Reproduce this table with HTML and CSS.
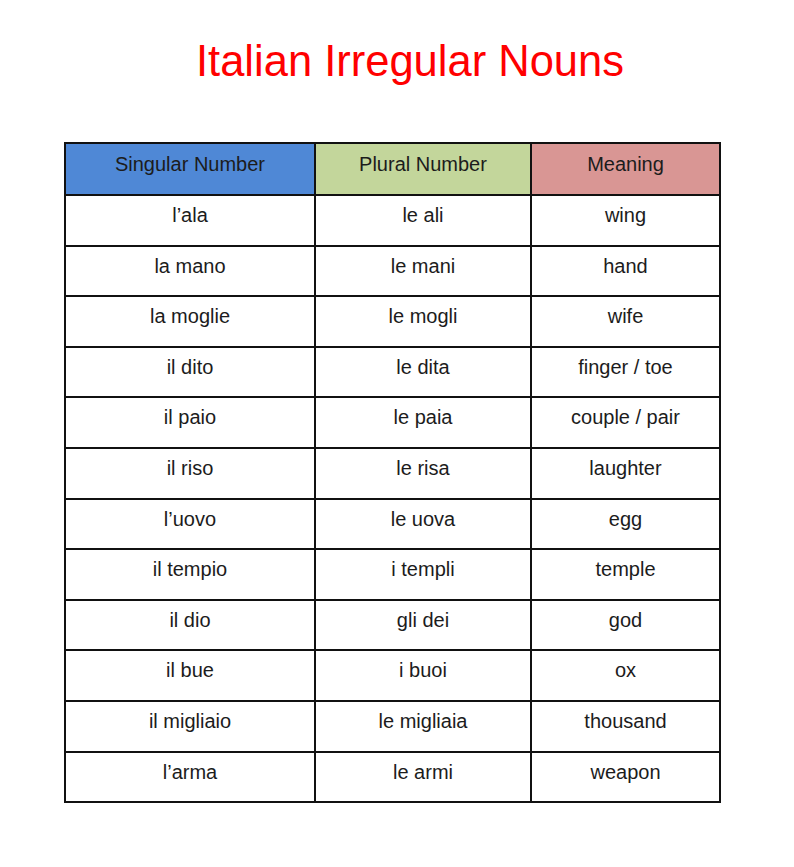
FILE: index.html
```html
<!DOCTYPE html>
<html>
<head>
<meta charset="utf-8">
<link rel="stylesheet" href="styles.css">
</head>
<body>
<div class="page">
  <h1 class="title">Italian Irregular Nouns</h1>
  <table class="nouns">
    <thead>
      <tr>
        <th class="h-sing">Singular Number</th>
        <th class="h-plur">Plural Number</th>
        <th class="h-mean">Meaning</th>
      </tr>
    </thead>
    <tbody>
      <tr><td>l’ala</td><td>le ali</td><td>wing</td></tr>
      <tr><td>la mano</td><td>le mani</td><td>hand</td></tr>
      <tr><td>la moglie</td><td>le mogli</td><td>wife</td></tr>
      <tr><td>il dito</td><td>le dita</td><td>finger / toe</td></tr>
      <tr><td>il paio</td><td>le paia</td><td>couple / pair</td></tr>
      <tr><td>il riso</td><td>le risa</td><td>laughter</td></tr>
      <tr><td>l’uovo</td><td>le uova</td><td>egg</td></tr>
      <tr><td>il tempio</td><td>i templi</td><td>temple</td></tr>
      <tr><td>il dio</td><td>gli dei</td><td>god</td></tr>
      <tr><td>il bue</td><td>i buoi</td><td>ox</td></tr>
      <tr><td>il migliaio</td><td>le migliaia</td><td>thousand</td></tr>
      <tr><td>l’arma</td><td>le armi</td><td>weapon</td></tr>
    </tbody>
  </table>
</div>
</body>
</html>
```
FILE: styles.css
```css
html, body {
  margin: 0;
  padding: 0;
  background: #ffffff;
}
.page {
  padding: 37px 0 0 64px;
  font-family: "Liberation Sans", Arial, sans-serif;
}
.title {
  margin: 0 0 56px 0;
  width: 692px;
  text-align: center;
  font-weight: normal;
  font-size: 43.5px;
  line-height: 49px;
  color: #ff0000;
}
.nouns {
  border-collapse: collapse;
  border: 2px solid #111111;
  table-layout: fixed;
  width: 655px;
}
.nouns th, .nouns td {
  border: 2px solid #111111;
  text-align: center;
  vertical-align: top;
  font-size: 20px;
  line-height: 23px;
  color: #1c1c1c;
  font-weight: normal;
  padding: 8px 0 0 0;
  box-sizing: border-box;
}
.nouns th {
  height: 52px;
  padding-top: 9px;
}
.nouns td {
  height: 50.6px;
}
.h-sing { width: 250px; background: #4f88d6; }
.h-plur { width: 216px; background: #c3d69b; }
.h-mean { width: 189px; background: #d99694; }
```
